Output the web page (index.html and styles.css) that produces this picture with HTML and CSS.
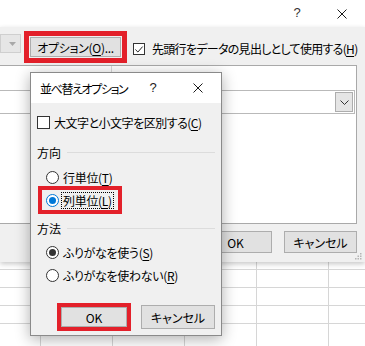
FILE: index.html
```html
<!DOCTYPE html>
<html lang="ja">
<head>
<meta charset="utf-8">
<title>並べ替えオプション</title>
<link rel="stylesheet" href="styles.css">
</head>
<body>
<div class="page">
  <div class="main-title">
    <span class="help">?</span>
    <svg class="close" width="10" height="10" viewBox="0 0 10 10"><path d="M0.5 0.5L9.5 9.5M9.5 0.5L0.5 9.5" stroke="#1a1a1a" stroke-width="1" fill="none"/></svg>
  </div>
  <div class="main-body">
    <div class="toolbar">
      <div class="stub"><svg width="7" height="4" viewBox="0 0 7 4"><path d="M0 0H7L3.5 4Z" fill="#a8a8a8"/></svg></div>
      <div class="hl hl-opt"><div class="btn opt-btn">オプション(<u>O</u>)...</div></div>
      <div class="check top-check">
        <span class="cbox"><svg width="11" height="11" viewBox="0 0 11 11"><path d="M1.5 5.5L4.3 8.3L9.5 2.3" stroke="#222" stroke-width="1.1" fill="none"/></svg></span>
        <span class="label">先頭行をデータの見出しとして使用する(<u>H</u>)</span>
      </div>
    </div>
    <div class="list">
      <div class="list-head"><div class="col1"></div></div>
      <div class="list-row">
        <div class="combo-btn"><svg width="9" height="5" viewBox="0 0 9 5"><path d="M0.5 0.5L4.5 4.5L8.5 0.5" stroke="#333" stroke-width="1" fill="none"/></svg></div>
      </div>
    </div>
    <div class="footer">
      <div class="btn foot-btn">OK</div>
      <div class="btn foot-btn">キャンセル</div>
    </div>
    <svg class="grip" width="7" height="7" viewBox="0 0 7 7"><g fill="#b4b4b4"><rect x="5" y="0" width="1.5" height="1.5"/><rect x="2.5" y="2.5" width="1.5" height="1.5"/><rect x="5" y="2.5" width="1.5" height="1.5"/><rect x="0" y="5" width="1.5" height="1.5"/><rect x="2.5" y="5" width="1.5" height="1.5"/><rect x="5" y="5" width="1.5" height="1.5"/></g></svg>
  </div>
  <div class="sheet"></div>

  <div class="dialog">
    <div class="dlg-title">
      <span class="dlg-name">並べ替えオプション</span>
      <span class="dlg-help">?</span>
      <svg class="dlg-close" width="10" height="10" viewBox="0 0 10 10"><path d="M0.5 0.5L9.5 9.5M9.5 0.5L0.5 9.5" stroke="#1a1a1a" stroke-width="1" fill="none"/></svg>
    </div>
    <div class="dlg-body">
      <div class="check dlg-check">
        <span class="cbox"></span>
        <span class="label">大文字と小文字を区別する(<u>C</u>)</span>
      </div>
      <div class="group g1"><span>方向</span><span class="rule"></span></div>
      <div class="radio-row r1"><span class="radio"></span><span class="label">行単位(<u>T</u>)</span></div>
      <div class="hl hl-radio">
        <div class="radio-row inner"><span class="radio on blue"></span><span class="label focus">列単位(<u>L</u>)</span></div>
      </div>
      <div class="group g2"><span>方法</span><span class="rule"></span></div>
      <div class="radio-row r3"><span class="radio on"></span><span class="label">ふりがなを使う(<u>S</u>)</span></div>
      <div class="radio-row r4"><span class="radio"></span><span class="label">ふりがなを使わない(<u>R</u>)</span></div>
      <div class="dlg-buttons">
        <div class="hl hl-ok"><div class="btn ok-btn">OK</div></div>
        <div class="btn cancel-btn">キャンセル</div>
      </div>
    </div>
  </div>
</div>
</body>
</html>
```
FILE: styles.css
```css
* { box-sizing: border-box; }
html, body { margin: 0; padding: 0; }
body {
  background: #fff;
  font-family: "Noto Sans CJK JP", "Noto Sans", sans-serif;
  font-size: 12px;
  color: #000;
  font-feature-settings: "palt";
}
.page { position: relative; width: 365px; height: 346px; overflow: hidden; }
u { text-decoration: underline; text-underline-offset: 2px; }

/* main dialog (background) */
.main-title {
  height: 27px;
  background: #fff;
  display: flex;
  align-items: center;
  justify-content: flex-end;
  padding-right: 18px;
}
.help { font-family: "Liberation Sans", sans-serif; font-size: 13px; color: #333; width: 8px; text-align: center; margin-right: 36px; margin-top: -2px; }
.close { display: block; margin-top: 0; }

.main-body {
  position: relative;
  z-index: 1;
  height: 235px;
  background: #f0f0f0;
  box-shadow: 0 2px 5px rgba(0,0,0,0.22);
}
.toolbar { height: 38px; display: flex; align-items: flex-start; }
.stub {
  margin-top: 7px;
  width: 21px; height: 19px;
  background: #e6e6e6;
  border: 1px solid #cfcfcf;
  display: flex; align-items: center; justify-content: center;
  padding-left: 4px;
}
.hl { border: 4px solid #e3202a; }
.hl-opt { margin-top: 4px; margin-left: 3px; border-width: 5px; padding: 1px; }
.btn {
  background: #e1e1e1;
  border: 1px solid #adadad;
  display: flex; align-items: center; justify-content: center;
  white-space: nowrap;
}
.opt-btn { width: 91px; height: 20px; letter-spacing: -0.3px; }

.check { display: flex; align-items: center; }
.cbox {
  width: 13px; height: 13px;
  border: 1px solid #333;
  background: #fff;
  display: flex; align-items: center; justify-content: center;
}
.top-check { margin-top: 11px; margin-left: 6px; height: 20px; }
.top-check .cbox { width: 12px; height: 12px; margin-top: 2px; }
.top-check .label { margin-left: 7px; letter-spacing: -0.7px; white-space: nowrap; }

.list {
  margin-left: -1px;
  width: 358px;
  height: 159px;
  background: #fff;
  border: 1px solid #a9a9a9;
}
.list-head { height: 24px; display: flex; }
.col1 { width: 112px; border-right: 1px solid #d8d8d8; }
.list-row {
  height: 24px;
  margin-right: 1px;
  border-top: 1px solid #b9b9b9;
  border-bottom: 1px solid #b9b9b9;
  border-right: 1px solid #b9b9b9;
  display: flex; justify-content: flex-end; align-items: center;
  padding-right: 1px;
}
.combo-btn {
  width: 18px; height: 20px;
  background: #e5e5e5;
  border: 1px solid #adadad;
  display: flex; align-items: center; justify-content: center;
}
.footer {
  margin-top: 7px;
  display: flex; justify-content: flex-end; gap: 12px;
  padding-right: 8px;
}
.foot-btn { width: 73px; height: 22px; }
.grip { position: absolute; right: 3px; bottom: 2px; }

.sheet {
  height: 84px;
  background-color: #fff;
  background-image:
    repeating-linear-gradient(to bottom, transparent 0 17px, #d6d6d6 17px 18px),
    repeating-linear-gradient(to right, transparent 0 71px, #d6d6d6 71px 72px);
  background-position: 0 -10px, -31px 0;
}

/* sort options dialog (overlay) */
.dialog {
  position: absolute;
  left: 30px; top: 72px;
  width: 192px; height: 264px;
  border: 1px solid #8a8a8a;
  background: #f0f0f0;
  box-shadow: 0 3px 14px rgba(0,0,0,0.32);
  z-index: 2;
  display: flex; flex-direction: column;
}
.dlg-title {
  height: 30px;
  background: #fff;
  display: flex; align-items: center;
  padding-left: 9px; padding-right: 18px;
}
.dlg-name { flex: 1; white-space: nowrap; letter-spacing: -1.4px; }
.dlg-help { font-family: "Liberation Sans", sans-serif; font-size: 13px; color: #222; width: 10px; text-align: center; margin-right: 35px; margin-top: -1px; }
.dlg-close { display: block; }
.dlg-body { flex: 1; padding-top: 9px; }
.dlg-check { height: 20px; padding-left: 6px; }
.dlg-check .label { margin-left: 4px; white-space: nowrap; letter-spacing: -0.5px; }

.group { height: 20px; display: flex; align-items: center; padding-left: 6px; padding-right: 6px; }
.group .rule { flex: 1; height: 1px; background: #dcdcdc; margin-left: 6px; }
.g1 { margin-top: 10px; }
.g2 { margin-top: 4px; }

.radio-row { height: 20px; display: flex; align-items: center; padding-left: 15px; white-space: nowrap; }
.radio-row .label { margin-left: 4px; letter-spacing: -0.3px; }
.radio {
  width: 13px; height: 13px;
  border: 1px solid #333;
  border-radius: 50%;
  background: #fff;
  display: flex; align-items: center; justify-content: center;
  flex: none;
}
.radio.on::after { content: ""; width: 7px; height: 7px; border-radius: 50%; background: #333; }
.radio.blue { border-color: #0078d7; }
.radio.blue::after { background: #0078d7; }
.r1 { margin-top: 5px; }
.hl-radio { margin-top: -1px; margin-left: 7px; width: 84px; }
.hl-radio .radio-row.inner { padding-left: 4px; }
.hl-radio .label.focus { margin-left: 2px; padding: 0 1px; line-height: 15px; border: 1px dotted #000; }
.r3 { margin-top: 4px; }
.r4 { margin-top: 3px; }

.dlg-buttons { margin-top: 18px; display: flex; align-items: center; padding-left: 26px; }
.ok-btn { width: 66px; height: 20px; }
.cancel-btn { width: 74px; height: 24px; margin-left: 10px; }
```
